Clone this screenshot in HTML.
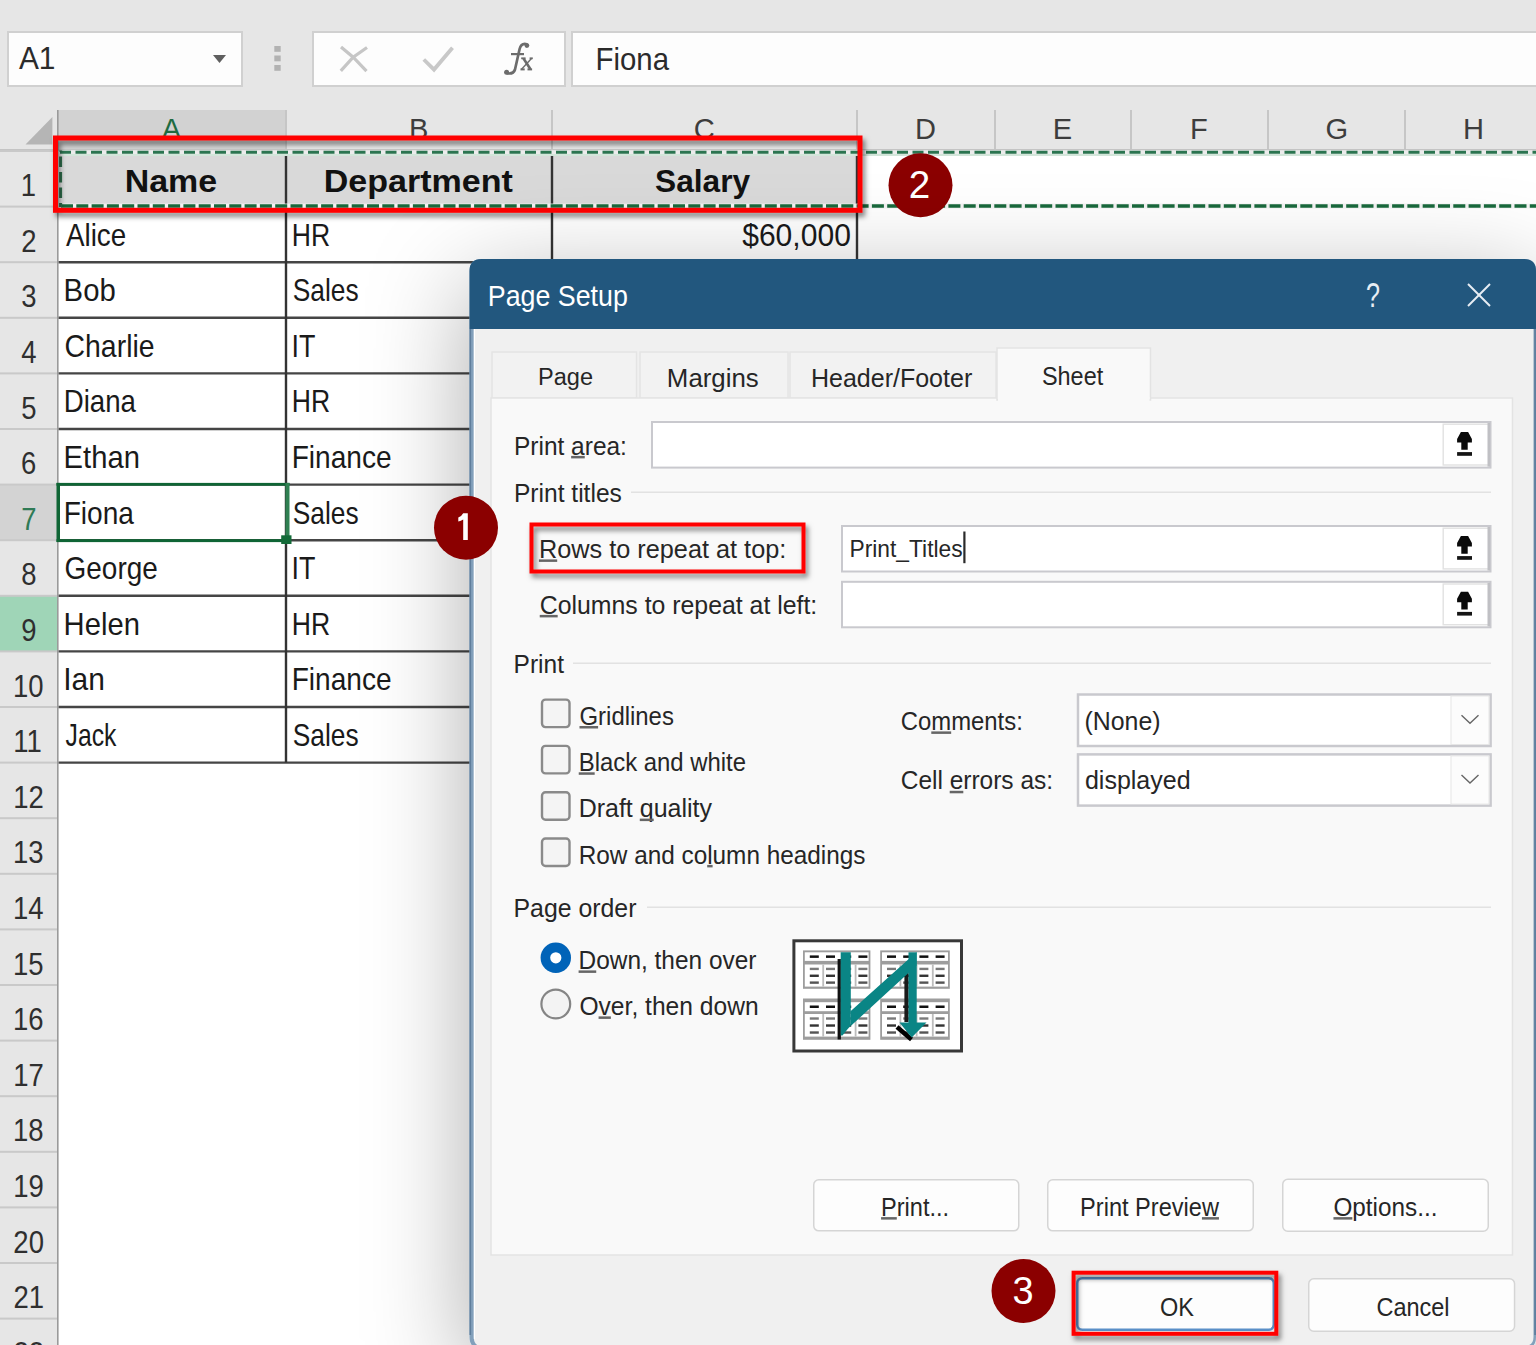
<!DOCTYPE html>
<html><head><meta charset="utf-8"><style>
html,body{margin:0;padding:0;background:#fff;overflow:hidden}
svg{display:block;font-family:"Liberation Sans",sans-serif}
</style></head><body>
<svg width="1536" height="1345" viewBox="0 0 1536 1345">
<defs>
<filter id="ds" x="-30%" y="-30%" width="160%" height="160%"><feDropShadow dx="0" dy="26" stdDeviation="50" flood-color="#000" flood-opacity="0.33"/></filter>
<filter id="rs" x="-10%" y="-30%" width="120%" height="160%"><feDropShadow dx="2.5" dy="4" stdDeviation="2.8" flood-color="#000" flood-opacity="0.5"/></filter>
</defs>
<rect x="0.00" y="0.00" width="1536.00" height="1345.00" fill="#ffffff" />
<rect x="0.00" y="0.00" width="1536.00" height="151.00" fill="#e6e6e6" />
<rect x="8.00" y="32.00" width="234.00" height="54.00" rx="0" fill="#fdfdfd" stroke="#d0d0d0" stroke-width="2"/>
<rect x="313.00" y="32.00" width="252.00" height="54.00" rx="0" fill="#fdfdfd" stroke="#d0d0d0" stroke-width="2"/>
<rect x="572.00" y="32.00" width="987.00" height="54.00" rx="0" fill="#fdfdfd" stroke="#d0d0d0" stroke-width="2"/>
<text x="18.94" y="69.00" font-size="30.52" font-weight="normal" fill="#2b2b2b" textLength="36.52" lengthAdjust="spacingAndGlyphs" >A1</text>
<polygon points="213,55 226,55 219.5,63" fill="#5f5f5f"/>
<rect x="274.30" y="46.00" width="6.40" height="5.80" fill="#b2b2b2" />
<rect x="274.30" y="55.50" width="6.40" height="5.80" fill="#b2b2b2" />
<rect x="274.30" y="65.00" width="6.40" height="5.80" fill="#b2b2b2" />
<polyline points="341,47 353.2,57.2 366.5,71.2" fill="none" stroke="#c6c6c6" stroke-width="3.2"/>
<polyline points="367,47.5 353.2,57.2 340.8,70.8" fill="none" stroke="#c6c6c6" stroke-width="3.2"/>
<polyline points="423.8,59.5 434,69.6 452.5,47.8" fill="none" stroke="#c8c8c8" stroke-width="3.8"/>
<path d="M526.8,44.2 Q521.2,42.8 519.6,49 L515,69.5 Q513.6,74.2 507.5,73.4" fill="none" stroke="#6c6c6c" stroke-width="2.7" stroke-linecap="round"/>
<circle cx="526.9" cy="45.6" r="2.4" fill="#6c6c6c"/>
<circle cx="506.6" cy="72.2" r="2.5" fill="#6c6c6c"/>
<rect x="511.00" y="53.00" width="13.00" height="2.20" fill="#6c6c6c" />
<path d="M523.5,58.5 L530.5,69.3" fill="none" stroke="#6c6c6c" stroke-width="2.6"/>
<path d="M531.5,58.5 L521.5,69.3" fill="none" stroke="#6c6c6c" stroke-width="1.4"/>
<rect x="520.50" y="68.40" width="4.20" height="2.00" fill="#6c6c6c" />
<rect x="527.50" y="68.40" width="4.60" height="2.00" fill="#6c6c6c" />
<rect x="521.20" y="57.40" width="4.40" height="1.80" fill="#6c6c6c" />
<rect x="529.60" y="57.40" width="3.20" height="1.80" fill="#6c6c6c" />
<text x="595.59" y="70.00" font-size="30.52" font-weight="normal" fill="#2b2b2b" textLength="73.41" lengthAdjust="spacingAndGlyphs" >Fiona</text>
<rect x="57.00" y="110.00" width="229.00" height="41.00" fill="#d2d2d2" />
<rect x="285.00" y="110.00" width="2.00" height="41.00" fill="#c6c6c6" />
<rect x="551.00" y="110.00" width="2.00" height="41.00" fill="#c6c6c6" />
<rect x="856.00" y="110.00" width="2.00" height="41.00" fill="#c6c6c6" />
<rect x="994.00" y="110.00" width="2.00" height="41.00" fill="#c6c6c6" />
<rect x="1130.00" y="110.00" width="2.00" height="41.00" fill="#c6c6c6" />
<rect x="1267.00" y="110.00" width="2.00" height="41.00" fill="#c6c6c6" />
<rect x="1404.00" y="110.00" width="2.00" height="41.00" fill="#c6c6c6" />
<rect x="0.00" y="149.00" width="1536.00" height="2.00" fill="#c4c4c4" />
<text x="161.81" y="139.00" font-size="29.07" font-weight="normal" fill="#1e6b41" textLength="19.39" lengthAdjust="spacingAndGlyphs" >A</text>
<text x="408.88" y="139.00" font-size="29.07" font-weight="normal" fill="#3d3d3d" textLength="19.39" lengthAdjust="spacingAndGlyphs" >B</text>
<text x="693.82" y="139.00" font-size="29.07" font-weight="normal" fill="#3d3d3d" textLength="20.99" lengthAdjust="spacingAndGlyphs" >C</text>
<text x="915.01" y="139.00" font-size="29.07" font-weight="normal" fill="#3d3d3d" textLength="20.99" lengthAdjust="spacingAndGlyphs" >D</text>
<text x="1052.74" y="139.00" font-size="29.07" font-weight="normal" fill="#3d3d3d" textLength="19.39" lengthAdjust="spacingAndGlyphs" >E</text>
<text x="1190.01" y="139.00" font-size="29.07" font-weight="normal" fill="#3d3d3d" textLength="17.76" lengthAdjust="spacingAndGlyphs" >F</text>
<text x="1325.55" y="139.00" font-size="29.07" font-weight="normal" fill="#3d3d3d" textLength="22.61" lengthAdjust="spacingAndGlyphs" >G</text>
<text x="1463.00" y="139.00" font-size="29.07" font-weight="normal" fill="#3d3d3d" textLength="20.99" lengthAdjust="spacingAndGlyphs" >H</text>
<polygon points="52.4,117 52.4,144.5 25.5,144.5" fill="#b5b5b5"/>
<rect x="0.00" y="151.00" width="57.00" height="1194.00" fill="#e6e6e6" />
<rect x="0.00" y="484.60" width="57.00" height="55.60" fill="#d3d3d3" />
<rect x="0.00" y="595.80" width="57.00" height="55.60" fill="#9fd5b7" />
<rect x="0.00" y="150.00" width="57.00" height="2.00" fill="#c9c9c9" />
<rect x="0.00" y="205.60" width="57.00" height="2.00" fill="#c9c9c9" />
<rect x="0.00" y="261.20" width="57.00" height="2.00" fill="#c9c9c9" />
<rect x="0.00" y="316.80" width="57.00" height="2.00" fill="#c9c9c9" />
<rect x="0.00" y="372.40" width="57.00" height="2.00" fill="#c9c9c9" />
<rect x="0.00" y="428.00" width="57.00" height="2.00" fill="#c9c9c9" />
<rect x="0.00" y="483.60" width="57.00" height="2.00" fill="#c9c9c9" />
<rect x="0.00" y="539.20" width="57.00" height="2.00" fill="#c9c9c9" />
<rect x="0.00" y="594.80" width="57.00" height="2.00" fill="#c9c9c9" />
<rect x="0.00" y="650.40" width="57.00" height="2.00" fill="#c9c9c9" />
<rect x="0.00" y="706.00" width="57.00" height="2.00" fill="#c9c9c9" />
<rect x="0.00" y="761.60" width="57.00" height="2.00" fill="#c9c9c9" />
<rect x="0.00" y="817.20" width="57.00" height="2.00" fill="#c9c9c9" />
<rect x="0.00" y="872.80" width="57.00" height="2.00" fill="#c9c9c9" />
<rect x="0.00" y="928.40" width="57.00" height="2.00" fill="#c9c9c9" />
<rect x="0.00" y="984.00" width="57.00" height="2.00" fill="#c9c9c9" />
<rect x="0.00" y="1039.60" width="57.00" height="2.00" fill="#c9c9c9" />
<rect x="0.00" y="1095.20" width="57.00" height="2.00" fill="#c9c9c9" />
<rect x="0.00" y="1150.80" width="57.00" height="2.00" fill="#c9c9c9" />
<rect x="0.00" y="1206.40" width="57.00" height="2.00" fill="#c9c9c9" />
<rect x="0.00" y="1262.00" width="57.00" height="2.00" fill="#c9c9c9" />
<rect x="0.00" y="1317.60" width="57.00" height="2.00" fill="#c9c9c9" />
<rect x="0.00" y="1373.20" width="57.00" height="2.00" fill="#c9c9c9" />
<rect x="57.00" y="110.00" width="1.60" height="1235.00" fill="#9a9a9a" />
<text x="20.79" y="196.10" font-size="30.52" font-weight="normal" fill="#2f2f2f" textLength="15.28" lengthAdjust="spacingAndGlyphs" >1</text>
<text x="21.16" y="251.70" font-size="30.52" font-weight="normal" fill="#2f2f2f" textLength="15.28" lengthAdjust="spacingAndGlyphs" >2</text>
<text x="21.24" y="307.30" font-size="30.52" font-weight="normal" fill="#2f2f2f" textLength="15.28" lengthAdjust="spacingAndGlyphs" >3</text>
<text x="21.25" y="362.90" font-size="30.52" font-weight="normal" fill="#2f2f2f" textLength="15.28" lengthAdjust="spacingAndGlyphs" >4</text>
<text x="21.19" y="418.50" font-size="30.52" font-weight="normal" fill="#2f2f2f" textLength="15.28" lengthAdjust="spacingAndGlyphs" >5</text>
<text x="21.07" y="474.10" font-size="30.52" font-weight="normal" fill="#2f2f2f" textLength="15.28" lengthAdjust="spacingAndGlyphs" >6</text>
<text x="21.15" y="529.70" font-size="30.52" font-weight="normal" fill="#2f7a55" textLength="15.28" lengthAdjust="spacingAndGlyphs" >7</text>
<text x="21.16" y="585.30" font-size="30.52" font-weight="normal" fill="#2f2f2f" textLength="15.28" lengthAdjust="spacingAndGlyphs" >8</text>
<text x="21.17" y="640.90" font-size="30.52" font-weight="normal" fill="#2f2f2f" textLength="15.28" lengthAdjust="spacingAndGlyphs" >9</text>
<text x="13.01" y="696.50" font-size="30.52" font-weight="normal" fill="#2f2f2f" textLength="30.56" lengthAdjust="spacingAndGlyphs" >10</text>
<text x="13.15" y="752.10" font-size="30.52" font-weight="normal" fill="#2f2f2f" textLength="28.52" lengthAdjust="spacingAndGlyphs" >11</text>
<text x="13.17" y="807.70" font-size="30.52" font-weight="normal" fill="#2f2f2f" textLength="30.56" lengthAdjust="spacingAndGlyphs" >12</text>
<text x="13.08" y="863.30" font-size="30.52" font-weight="normal" fill="#2f2f2f" textLength="30.56" lengthAdjust="spacingAndGlyphs" >13</text>
<text x="12.88" y="918.90" font-size="30.52" font-weight="normal" fill="#2f2f2f" textLength="30.56" lengthAdjust="spacingAndGlyphs" >14</text>
<text x="13.05" y="974.50" font-size="30.52" font-weight="normal" fill="#2f2f2f" textLength="30.56" lengthAdjust="spacingAndGlyphs" >15</text>
<text x="13.08" y="1030.10" font-size="30.52" font-weight="normal" fill="#2f2f2f" textLength="30.56" lengthAdjust="spacingAndGlyphs" >16</text>
<text x="13.17" y="1085.70" font-size="30.52" font-weight="normal" fill="#2f2f2f" textLength="30.56" lengthAdjust="spacingAndGlyphs" >17</text>
<text x="13.07" y="1141.30" font-size="30.52" font-weight="normal" fill="#2f2f2f" textLength="30.56" lengthAdjust="spacingAndGlyphs" >18</text>
<text x="13.13" y="1196.90" font-size="30.52" font-weight="normal" fill="#2f2f2f" textLength="30.56" lengthAdjust="spacingAndGlyphs" >19</text>
<text x="13.37" y="1252.50" font-size="30.52" font-weight="normal" fill="#2f2f2f" textLength="30.56" lengthAdjust="spacingAndGlyphs" >20</text>
<text x="13.50" y="1308.10" font-size="30.52" font-weight="normal" fill="#2f2f2f" textLength="30.56" lengthAdjust="spacingAndGlyphs" >21</text>
<text x="13.52" y="1363.70" font-size="30.52" font-weight="normal" fill="#2f2f2f" textLength="30.56" lengthAdjust="spacingAndGlyphs" >22</text>
<rect x="58.60" y="151.00" width="798.40" height="55.60" fill="#d9d9d9" />
<line x1="58.60" y1="262.20" x2="858.00" y2="262.20" stroke="#454545" stroke-width="2.4" />
<line x1="58.60" y1="317.80" x2="858.00" y2="317.80" stroke="#454545" stroke-width="2.4" />
<line x1="58.60" y1="373.40" x2="858.00" y2="373.40" stroke="#454545" stroke-width="2.4" />
<line x1="58.60" y1="429.00" x2="858.00" y2="429.00" stroke="#454545" stroke-width="2.4" />
<line x1="58.60" y1="484.60" x2="858.00" y2="484.60" stroke="#454545" stroke-width="2.4" />
<line x1="58.60" y1="540.20" x2="858.00" y2="540.20" stroke="#454545" stroke-width="2.4" />
<line x1="58.60" y1="595.80" x2="858.00" y2="595.80" stroke="#454545" stroke-width="2.4" />
<line x1="58.60" y1="651.40" x2="858.00" y2="651.40" stroke="#454545" stroke-width="2.4" />
<line x1="58.60" y1="707.00" x2="858.00" y2="707.00" stroke="#454545" stroke-width="2.4" />
<line x1="58.60" y1="762.60" x2="858.00" y2="762.60" stroke="#454545" stroke-width="2.4" />
<line x1="286.00" y1="151.00" x2="286.00" y2="762.60" stroke="#333333" stroke-width="2.4" />
<line x1="552.00" y1="151.00" x2="552.00" y2="762.60" stroke="#333333" stroke-width="2.4" />
<line x1="857.00" y1="151.00" x2="857.00" y2="762.60" stroke="#333333" stroke-width="2.4" />
<text x="124.73" y="192.00" font-size="31.25" font-weight="bold" fill="#111" textLength="92.43" lengthAdjust="spacingAndGlyphs" >Name</text>
<text x="323.72" y="192.00" font-size="31.25" font-weight="bold" fill="#111" textLength="189.19" lengthAdjust="spacingAndGlyphs" >Department</text>
<text x="655.09" y="192.00" font-size="31.25" font-weight="bold" fill="#111" textLength="95.08" lengthAdjust="spacingAndGlyphs" >Salary</text>
<text x="65.95" y="245.50" font-size="31.25" font-weight="normal" fill="#1a1a1a" textLength="60.29" lengthAdjust="spacingAndGlyphs" >Alice</text>
<text x="291.82" y="245.50" font-size="31.25" font-weight="normal" fill="#1a1a1a" textLength="38.42" lengthAdjust="spacingAndGlyphs" >HR</text>
<text x="63.60" y="301.10" font-size="31.25" font-weight="normal" fill="#1a1a1a" textLength="52.13" lengthAdjust="spacingAndGlyphs" >Bob</text>
<text x="292.80" y="301.10" font-size="31.25" font-weight="normal" fill="#1a1a1a" textLength="65.85" lengthAdjust="spacingAndGlyphs" >Sales</text>
<text x="64.56" y="356.70" font-size="31.25" font-weight="normal" fill="#1a1a1a" textLength="90.01" lengthAdjust="spacingAndGlyphs" >Charlie</text>
<text x="291.52" y="356.70" font-size="31.25" font-weight="normal" fill="#1a1a1a" textLength="23.90" lengthAdjust="spacingAndGlyphs" >IT</text>
<text x="63.73" y="412.30" font-size="31.25" font-weight="normal" fill="#1a1a1a" textLength="72.27" lengthAdjust="spacingAndGlyphs" >Diana</text>
<text x="291.82" y="412.30" font-size="31.25" font-weight="normal" fill="#1a1a1a" textLength="38.42" lengthAdjust="spacingAndGlyphs" >HR</text>
<text x="63.61" y="467.90" font-size="31.25" font-weight="normal" fill="#1a1a1a" textLength="76.29" lengthAdjust="spacingAndGlyphs" >Ethan</text>
<text x="291.70" y="467.90" font-size="31.25" font-weight="normal" fill="#1a1a1a" textLength="99.95" lengthAdjust="spacingAndGlyphs" >Finance</text>
<text x="63.69" y="523.50" font-size="31.25" font-weight="normal" fill="#1a1a1a" textLength="70.31" lengthAdjust="spacingAndGlyphs" >Fiona</text>
<text x="292.80" y="523.50" font-size="31.25" font-weight="normal" fill="#1a1a1a" textLength="65.85" lengthAdjust="spacingAndGlyphs" >Sales</text>
<text x="64.59" y="579.10" font-size="31.25" font-weight="normal" fill="#1a1a1a" textLength="93.25" lengthAdjust="spacingAndGlyphs" >George</text>
<text x="291.52" y="579.10" font-size="31.25" font-weight="normal" fill="#1a1a1a" textLength="23.90" lengthAdjust="spacingAndGlyphs" >IT</text>
<text x="63.60" y="634.70" font-size="31.25" font-weight="normal" fill="#1a1a1a" textLength="76.29" lengthAdjust="spacingAndGlyphs" >Helen</text>
<text x="291.82" y="634.70" font-size="31.25" font-weight="normal" fill="#1a1a1a" textLength="38.42" lengthAdjust="spacingAndGlyphs" >HR</text>
<text x="63.23" y="690.30" font-size="31.25" font-weight="normal" fill="#1a1a1a" textLength="41.72" lengthAdjust="spacingAndGlyphs" >Ian</text>
<text x="291.70" y="690.30" font-size="31.25" font-weight="normal" fill="#1a1a1a" textLength="99.95" lengthAdjust="spacingAndGlyphs" >Finance</text>
<text x="65.61" y="745.90" font-size="31.25" font-weight="normal" fill="#1a1a1a" textLength="50.85" lengthAdjust="spacingAndGlyphs" >Jack</text>
<text x="292.80" y="745.90" font-size="31.25" font-weight="normal" fill="#1a1a1a" textLength="65.85" lengthAdjust="spacingAndGlyphs" >Sales</text>
<text x="742.18" y="245.50" font-size="31.25" font-weight="normal" fill="#1a1a1a" textLength="108.70" lengthAdjust="spacingAndGlyphs" >$60,000</text>
<rect x="56.50" y="482.90" width="233.00" height="2.80" fill="#0f6535" />
<rect x="56.50" y="482.90" width="3.50" height="59.00" fill="#0f6535" />
<rect x="285.40" y="482.90" width="4.10" height="54.00" fill="#2f8052" />
<rect x="56.50" y="539.20" width="226.00" height="2.90" fill="#0f6535" />
<rect x="281.20" y="535.30" width="10.30" height="8.70" fill="#136a38" />
<rect x="59.00" y="150.20" width="1477.00" height="5.20" fill="#ececec" />
<rect x="59.00" y="154.00" width="1477.00" height="2.00" fill="#d3e6da" />
<rect x="59.00" y="203.60" width="1477.00" height="5.00" fill="#f3f3f3" />
<rect x="58.80" y="150.20" width="3.60" height="57.50" fill="#e4e4e4" />
<line x1="59.00" y1="152.20" x2="1536.00" y2="152.20" stroke="#2b7550" stroke-width="2.9" stroke-dasharray="11 4.5" stroke-dashoffset="-1"/>
<line x1="59.00" y1="206.00" x2="1536.00" y2="206.00" stroke="#18693c" stroke-width="3.6" stroke-dasharray="12 3.3" stroke-dashoffset="-2"/>
<line x1="60.60" y1="150.50" x2="60.60" y2="207.00" stroke="#2f6f4c" stroke-width="3" stroke-dasharray="10.5 5" stroke-dashoffset="-6"/>
<rect x="55.5" y="138" width="804.5" height="72.3" fill="none" stroke="#ff0000" stroke-width="5" filter="url(#rs)"/>
<circle cx="920.5" cy="185.3" r="32" fill="#8b0000"/>
<text x="908.66" y="197.60" font-size="38.37" font-weight="normal" fill="#ffffff" textLength="21.49" lengthAdjust="spacingAndGlyphs" >2</text>
<path d="M469.5,1337 V271 Q469.5,259 481.5,259 H1524 Q1536,259 1536,271 V1337 Q1536,1349 1524,1349 H481.5 Q469.5,1349 469.5,1337 Z" fill="#82a0bb" filter="url(#ds)"/>
<path d="M473.8,1337 V329 H1533.5 V1337 Q1533.5,1346 1524,1346 H481.5 Q473.8,1346 473.8,1337 Z" fill="#f0f0f0"/>
<path d="M469.5,329 V271 Q469.5,259 481.5,259 H1524 Q1536,259 1536,271 V329 Z" fill="#22577e"/>
<rect x="469.50" y="329.00" width="1.60" height="1006.00" fill="#5f7e9c" />
<rect x="473.80" y="329.00" width="1.20" height="1010.00" fill="#ffffff" />
<rect x="1534.20" y="329.00" width="1.80" height="1006.00" fill="#5f7f9e" />
<text x="487.80" y="305.60" font-size="29.51" font-weight="normal" fill="#ffffff" textLength="140.02" lengthAdjust="spacingAndGlyphs" >Page Setup</text>
<text x="1365.97" y="307.00" font-size="34.88" font-weight="normal" fill="#e8eef4" textLength="13.96" lengthAdjust="spacingAndGlyphs" >?</text>
<line x1="1468.00" y1="284.00" x2="1490.00" y2="306.00" stroke="#e8eef4" stroke-width="2" />
<line x1="1490.00" y1="284.00" x2="1468.00" y2="306.00" stroke="#e8eef4" stroke-width="2" />
<rect x="492" y="352" width="144.5" height="46" fill="#f2f2f2" stroke="#e4e4e4" stroke-width="1.5"/>
<rect x="640" y="352" width="148" height="46" fill="#f2f2f2" stroke="#e4e4e4" stroke-width="1.5"/>
<rect x="790" y="352" width="206" height="46" fill="#f2f2f2" stroke="#e4e4e4" stroke-width="1.5"/>
<rect x="491" y="398" width="1021.5" height="857" fill="#f9f9f9" stroke="#e3e3e3" stroke-width="1.5"/>
<rect x="997.00" y="348.00" width="153.50" height="52.00" fill="#f9f9f9" stroke="#e3e3e3" stroke-width="1.5"/>
<rect x="998.00" y="397.00" width="151.50" height="4.00" fill="#f9f9f9" />
<text x="538.07" y="385.00" font-size="23.98" font-weight="normal" fill="#262626" textLength="54.98" lengthAdjust="spacingAndGlyphs" >Page</text>
<text x="666.88" y="386.50" font-size="25.44" font-weight="normal" fill="#262626" textLength="91.85" lengthAdjust="spacingAndGlyphs" >Margins</text>
<text x="810.95" y="386.50" font-size="25.44" font-weight="normal" fill="#262626" textLength="161.27" lengthAdjust="spacingAndGlyphs" >Header/Footer</text>
<text x="1041.94" y="384.70" font-size="25.44" font-weight="normal" fill="#262626" textLength="61.24" lengthAdjust="spacingAndGlyphs" >Sheet</text>
<rect x="652" y="422" width="838.5" height="45.60000000000002" fill="#ffffff" stroke="#c9c9ce" stroke-width="2"/>
<rect x="1443.2" y="424.2" width="45.6" height="40.800000000000026" fill="#ffffff" stroke="#e2e2e2" stroke-width="1.4"/>
<rect x="1487.50" y="423.00" width="2.50" height="43.60" fill="#c0c0c4" />
<polygon points="1460.9,432 1468.1,432 1471.9,439 1471.9,442.5 1467.7,442.5 1467.7,449.7 1461.3,449.7 1461.3,442.5 1457.1,442.5 1457.1,439" fill="#0a0a0a"/>
<rect x="1457.10" y="452.10" width="14.90" height="3.70" fill="#151515" />
<text x="513.99" y="454.50" font-size="25.44" font-weight="normal" fill="#262626" textLength="112.94" lengthAdjust="spacingAndGlyphs" >Print area:</text>
<rect x="571.13" y="455.90" width="13.62" height="2.50" fill="#666666" />
<text x="513.98" y="502.00" font-size="25.44" font-weight="normal" fill="#262626" textLength="107.90" lengthAdjust="spacingAndGlyphs" >Print titles</text>
<rect x="631.00" y="491.50" width="860.00" height="1.50" fill="#e2e2e2" />
<rect x="842" y="526" width="648.5" height="45.5" fill="#ffffff" stroke="#c9c9ce" stroke-width="2"/>
<rect x="1443.2" y="528.2" width="45.6" height="40.7" fill="#ffffff" stroke="#e2e2e2" stroke-width="1.4"/>
<rect x="1487.50" y="527.00" width="2.50" height="43.50" fill="#c0c0c4" />
<polygon points="1460.9,536 1468.1,536 1471.9,543 1471.9,546.5 1467.7,546.5 1467.7,553.7 1461.3,553.7 1461.3,546.5 1457.1,546.5 1457.1,543" fill="#0a0a0a"/>
<rect x="1457.10" y="556.10" width="14.90" height="3.70" fill="#151515" />
<rect x="842" y="581.8" width="648.5" height="45.5" fill="#ffffff" stroke="#c9c9ce" stroke-width="2"/>
<rect x="1443.2" y="584.0" width="45.6" height="40.7" fill="#ffffff" stroke="#e2e2e2" stroke-width="1.4"/>
<rect x="1487.50" y="582.80" width="2.50" height="43.50" fill="#c0c0c4" />
<polygon points="1460.9,591.8 1468.1,591.8 1471.9,598.8 1471.9,602.3 1467.7,602.3 1467.7,609.5 1461.3,609.5 1461.3,602.3 1457.1,602.3 1457.1,598.8" fill="#0a0a0a"/>
<rect x="1457.10" y="611.90" width="14.90" height="3.70" fill="#151515" />
<text x="538.93" y="558.00" font-size="25.44" font-weight="normal" fill="#262626" textLength="247.38" lengthAdjust="spacingAndGlyphs" >Rows to repeat at top:</text>
<rect x="538.93" y="559.40" width="18.26" height="2.50" fill="#666666" />
<text x="539.74" y="613.50" font-size="25.44" font-weight="normal" fill="#262626" textLength="277.53" lengthAdjust="spacingAndGlyphs" >Columns to repeat at left:</text>
<rect x="539.74" y="614.90" width="17.94" height="2.50" fill="#666666" />
<text x="849.53" y="557.00" font-size="24.13" font-weight="normal" fill="#262626" textLength="113.09" lengthAdjust="spacingAndGlyphs" >Print_Titles</text>
<rect x="963.30" y="531.50" width="2.20" height="31.70" fill="#2a2a2a" />
<rect x="531.5" y="524.5" width="272" height="47" fill="none" stroke="#ff0000" stroke-width="4" filter="url(#rs)"/>
<text x="513.59" y="673.00" font-size="25.44" font-weight="normal" fill="#262626" textLength="50.39" lengthAdjust="spacingAndGlyphs" >Print</text>
<rect x="573.00" y="662.50" width="918.00" height="1.50" fill="#e2e2e2" />
<rect x="542" y="699.6" width="27.5" height="27.5" rx="3.5" fill="#f4f4f4" stroke="#8a8a8a" stroke-width="2.4"/>
<text x="579.50" y="724.60" font-size="25.44" font-weight="normal" fill="#262626" textLength="94.37" lengthAdjust="spacingAndGlyphs" >Gridlines</text>
<rect x="579.50" y="726.00" width="18.60" height="2.50" fill="#666666" />
<rect x="542" y="745.9" width="27.5" height="27.5" rx="3.5" fill="#f4f4f4" stroke="#8a8a8a" stroke-width="2.4"/>
<text x="578.74" y="770.90" font-size="25.44" font-weight="normal" fill="#262626" textLength="167.32" lengthAdjust="spacingAndGlyphs" >Black and white</text>
<rect x="578.74" y="772.30" width="15.93" height="2.50" fill="#666666" />
<rect x="542" y="792.2" width="27.5" height="27.5" rx="3.5" fill="#f4f4f4" stroke="#8a8a8a" stroke-width="2.4"/>
<text x="578.65" y="817.20" font-size="25.44" font-weight="normal" fill="#262626" textLength="133.40" lengthAdjust="spacingAndGlyphs" >Draft quality</text>
<rect x="639.78" y="818.60" width="13.91" height="2.50" fill="#666666" />
<rect x="542" y="838.5" width="27.5" height="27.5" rx="3.5" fill="#f4f4f4" stroke="#8a8a8a" stroke-width="2.4"/>
<text x="578.70" y="863.50" font-size="25.44" font-weight="normal" fill="#262626" textLength="286.78" lengthAdjust="spacingAndGlyphs" >Row and column headings</text>
<rect x="707.20" y="864.90" width="5.41" height="2.50" fill="#666666" />
<text x="900.79" y="730.00" font-size="25.44" font-weight="normal" fill="#262626" textLength="121.99" lengthAdjust="spacingAndGlyphs" >Comments:</text>
<rect x="931.29" y="731.40" width="19.88" height="2.50" fill="#666666" />
<text x="900.76" y="789.40" font-size="25.44" font-weight="normal" fill="#262626" textLength="152.28" lengthAdjust="spacingAndGlyphs" >Cell errors as:</text>
<rect x="949.70" y="790.80" width="13.61" height="2.50" fill="#666666" />
<rect x="1078" y="694.5" width="412.6" height="51.5" fill="#ffffff" stroke="#c9c9ce" stroke-width="2.5"/>
<rect x="1451" y="696.0" width="38" height="48.5" fill="#fcfcfc" stroke="#e6e6e6" stroke-width="1"/>
<polyline points="1461.5,715.25 1470,723.25 1478.5,715.25" fill="none" stroke="#666" stroke-width="1.4"/>
<text x="1084.46" y="730.00" font-size="25.44" font-weight="normal" fill="#262626" textLength="76.09" lengthAdjust="spacingAndGlyphs" >(None)</text>
<rect x="1078" y="754.4" width="412.6" height="51.200000000000045" fill="#ffffff" stroke="#c9c9ce" stroke-width="2.5"/>
<rect x="1451" y="755.9" width="38" height="48.200000000000045" fill="#fcfcfc" stroke="#e6e6e6" stroke-width="1"/>
<polyline points="1461.5,775.0 1470,783.0 1478.5,775.0" fill="none" stroke="#666" stroke-width="1.4"/>
<text x="1084.95" y="788.50" font-size="25.44" font-weight="normal" fill="#262626" textLength="105.66" lengthAdjust="spacingAndGlyphs" >displayed</text>
<text x="513.56" y="917.00" font-size="25.44" font-weight="normal" fill="#262626" textLength="122.85" lengthAdjust="spacingAndGlyphs" >Page order</text>
<rect x="647.00" y="906.50" width="844.00" height="1.50" fill="#e2e2e2" />
<circle cx="555.8" cy="957.8" r="15.2" fill="#0063b8"/>
<circle cx="555.8" cy="957.8" r="5.6" fill="#ffffff"/>
<circle cx="555.8" cy="1004" r="14.4" fill="#f3f3f3" stroke="#858585" stroke-width="2.2"/>
<text x="578.60" y="969.00" font-size="25.44" font-weight="normal" fill="#262626" textLength="177.81" lengthAdjust="spacingAndGlyphs" >Down, then over</text>
<rect x="578.60" y="970.40" width="17.63" height="2.50" fill="#666666" />
<text x="579.43" y="1015.00" font-size="25.44" font-weight="normal" fill="#262626" textLength="179.16" lengthAdjust="spacingAndGlyphs" >Over, then down</text>
<rect x="598.57" y="1016.40" width="12.30" height="2.50" fill="#666666" />
<g id="icon">
<rect x="793.9" y="940.8" width="167.6" height="110.2" fill="#ffffff" stroke="#383838" stroke-width="3"/>
<rect x="803.00" y="950.40" width="67.40" height="38.40" fill="#9d9d9d" />
<rect x="804.80" y="952.30" width="63.80" height="8.60" fill="#ffffff" />
<rect x="804.80" y="964.50" width="63.80" height="22.10" fill="#ffffff" />
<rect x="822.30" y="964.50" width="1.80" height="22.10" fill="#bdbdbd" />
<rect x="838.50" y="964.50" width="1.80" height="22.10" fill="#bdbdbd" />
<rect x="854.70" y="964.50" width="1.80" height="22.10" fill="#bdbdbd" />
<rect x="809.80" y="955.40" width="9.00" height="2.50" fill="#111" />
<rect x="809.80" y="967.72" width="9.00" height="2.40" fill="#7a7a7a" />
<rect x="809.80" y="974.57" width="9.00" height="2.40" fill="#333" />
<rect x="809.80" y="981.42" width="9.00" height="2.40" fill="#555" />
<rect x="826.00" y="955.40" width="9.00" height="2.50" fill="#111" />
<rect x="826.00" y="967.72" width="9.00" height="2.40" fill="#7a7a7a" />
<rect x="826.00" y="974.57" width="9.00" height="2.40" fill="#333" />
<rect x="826.00" y="981.42" width="9.00" height="2.40" fill="#555" />
<rect x="842.20" y="955.40" width="9.00" height="2.50" fill="#111" />
<rect x="842.20" y="967.72" width="9.00" height="2.40" fill="#7a7a7a" />
<rect x="842.20" y="974.57" width="9.00" height="2.40" fill="#333" />
<rect x="842.20" y="981.42" width="9.00" height="2.40" fill="#555" />
<rect x="858.40" y="955.40" width="9.00" height="2.50" fill="#111" />
<rect x="858.40" y="967.72" width="9.00" height="2.40" fill="#7a7a7a" />
<rect x="858.40" y="974.57" width="9.00" height="2.40" fill="#333" />
<rect x="858.40" y="981.42" width="9.00" height="2.40" fill="#555" />
<rect x="803.00" y="998.50" width="67.40" height="41.30" fill="#9d9d9d" />
<rect x="804.80" y="1002.20" width="63.80" height="9.00" fill="#ffffff" />
<rect x="804.80" y="1014.00" width="63.80" height="22.60" fill="#ffffff" />
<rect x="822.30" y="1014.00" width="1.80" height="22.60" fill="#bdbdbd" />
<rect x="838.50" y="1014.00" width="1.80" height="22.60" fill="#bdbdbd" />
<rect x="854.70" y="1014.00" width="1.80" height="22.60" fill="#bdbdbd" />
<rect x="809.80" y="1005.50" width="9.00" height="2.50" fill="#111" />
<rect x="809.80" y="1017.32" width="9.00" height="2.40" fill="#7a7a7a" />
<rect x="809.80" y="1024.33" width="9.00" height="2.40" fill="#333" />
<rect x="809.80" y="1031.33" width="9.00" height="2.40" fill="#555" />
<rect x="826.00" y="1005.50" width="9.00" height="2.50" fill="#111" />
<rect x="826.00" y="1017.32" width="9.00" height="2.40" fill="#7a7a7a" />
<rect x="826.00" y="1024.33" width="9.00" height="2.40" fill="#333" />
<rect x="826.00" y="1031.33" width="9.00" height="2.40" fill="#555" />
<rect x="842.20" y="1005.50" width="9.00" height="2.50" fill="#111" />
<rect x="842.20" y="1017.32" width="9.00" height="2.40" fill="#7a7a7a" />
<rect x="842.20" y="1024.33" width="9.00" height="2.40" fill="#333" />
<rect x="842.20" y="1031.33" width="9.00" height="2.40" fill="#555" />
<rect x="858.40" y="1005.50" width="9.00" height="2.50" fill="#111" />
<rect x="858.40" y="1017.32" width="9.00" height="2.40" fill="#7a7a7a" />
<rect x="858.40" y="1024.33" width="9.00" height="2.40" fill="#333" />
<rect x="858.40" y="1031.33" width="9.00" height="2.40" fill="#555" />
<rect x="880.20" y="950.40" width="69.60" height="38.40" fill="#9d9d9d" />
<rect x="882.00" y="952.30" width="66.00" height="8.60" fill="#ffffff" />
<rect x="882.00" y="964.50" width="66.00" height="22.10" fill="#ffffff" />
<rect x="899.50" y="964.50" width="1.80" height="22.10" fill="#bdbdbd" />
<rect x="915.70" y="964.50" width="1.80" height="22.10" fill="#bdbdbd" />
<rect x="931.90" y="964.50" width="1.80" height="22.10" fill="#bdbdbd" />
<rect x="887.00" y="955.40" width="9.00" height="2.50" fill="#111" />
<rect x="887.00" y="967.72" width="9.00" height="2.40" fill="#7a7a7a" />
<rect x="887.00" y="974.57" width="9.00" height="2.40" fill="#333" />
<rect x="887.00" y="981.42" width="9.00" height="2.40" fill="#555" />
<rect x="903.20" y="955.40" width="9.00" height="2.50" fill="#111" />
<rect x="903.20" y="967.72" width="9.00" height="2.40" fill="#7a7a7a" />
<rect x="903.20" y="974.57" width="9.00" height="2.40" fill="#333" />
<rect x="903.20" y="981.42" width="9.00" height="2.40" fill="#555" />
<rect x="919.40" y="955.40" width="9.00" height="2.50" fill="#111" />
<rect x="919.40" y="967.72" width="9.00" height="2.40" fill="#7a7a7a" />
<rect x="919.40" y="974.57" width="9.00" height="2.40" fill="#333" />
<rect x="919.40" y="981.42" width="9.00" height="2.40" fill="#555" />
<rect x="935.60" y="955.40" width="9.00" height="2.50" fill="#111" />
<rect x="935.60" y="967.72" width="9.00" height="2.40" fill="#7a7a7a" />
<rect x="935.60" y="974.57" width="9.00" height="2.40" fill="#333" />
<rect x="935.60" y="981.42" width="9.00" height="2.40" fill="#555" />
<rect x="880.20" y="998.50" width="69.60" height="41.30" fill="#9d9d9d" />
<rect x="882.00" y="1002.20" width="66.00" height="9.00" fill="#ffffff" />
<rect x="882.00" y="1014.00" width="66.00" height="22.60" fill="#ffffff" />
<rect x="899.50" y="1014.00" width="1.80" height="22.60" fill="#bdbdbd" />
<rect x="915.70" y="1014.00" width="1.80" height="22.60" fill="#bdbdbd" />
<rect x="931.90" y="1014.00" width="1.80" height="22.60" fill="#bdbdbd" />
<rect x="887.00" y="1005.50" width="9.00" height="2.50" fill="#111" />
<rect x="887.00" y="1017.32" width="9.00" height="2.40" fill="#7a7a7a" />
<rect x="887.00" y="1024.33" width="9.00" height="2.40" fill="#333" />
<rect x="887.00" y="1031.33" width="9.00" height="2.40" fill="#555" />
<rect x="903.20" y="1005.50" width="9.00" height="2.50" fill="#111" />
<rect x="903.20" y="1017.32" width="9.00" height="2.40" fill="#7a7a7a" />
<rect x="903.20" y="1024.33" width="9.00" height="2.40" fill="#333" />
<rect x="903.20" y="1031.33" width="9.00" height="2.40" fill="#555" />
<rect x="919.40" y="1005.50" width="9.00" height="2.50" fill="#111" />
<rect x="919.40" y="1017.32" width="9.00" height="2.40" fill="#7a7a7a" />
<rect x="919.40" y="1024.33" width="9.00" height="2.40" fill="#333" />
<rect x="919.40" y="1031.33" width="9.00" height="2.40" fill="#555" />
<rect x="935.60" y="1005.50" width="9.00" height="2.50" fill="#111" />
<rect x="935.60" y="1017.32" width="9.00" height="2.40" fill="#7a7a7a" />
<rect x="935.60" y="1024.33" width="9.00" height="2.40" fill="#333" />
<rect x="935.60" y="1031.33" width="9.00" height="2.40" fill="#555" />
<rect x="837.60" y="959.00" width="3.30" height="80.50" fill="#111" />
<rect x="904.40" y="971.00" width="4.20" height="51.00" fill="#1a1a1a" />
<line x1="897.00" y1="1027.00" x2="911.50" y2="1039.50" stroke="#000" stroke-width="4.5" />
<polygon points="840.7,952.3 850.8,952.3 850.8,1025 842.5,1035.5 840.7,1035.5" fill="#0a8585"/>
<polygon points="841.5,1034.5 916.6,965.4 916.6,951.9 850.8,1011.1 850.8,1025" fill="#0a8585"/>
<rect x="908.50" y="952.30" width="8.20" height="71.00" fill="#0a8585" />
<polygon points="899.5,1022.6 926.5,1022.6 911.7,1037.4" fill="#0a8585"/>
</g>
<rect x="813.75" y="1179.75" width="205.0" height="51.09999999999991" rx="5" fill="#fdfdfd" stroke="#d5d5d5" stroke-width="1.5"/>
<text x="881.07" y="1215.70" font-size="25.44" font-weight="normal" fill="#262626" textLength="68.08" lengthAdjust="spacingAndGlyphs" >Print...</text>
<rect x="881.07" y="1217.10" width="15.72" height="2.50" fill="#666666" />
<rect x="1047.75" y="1179.75" width="205.5" height="51.09999999999991" rx="5" fill="#fdfdfd" stroke="#d5d5d5" stroke-width="1.5"/>
<text x="1080.07" y="1215.70" font-size="25.44" font-weight="normal" fill="#262626" textLength="138.88" lengthAdjust="spacingAndGlyphs" >Print Preview</text>
<rect x="1201.92" y="1217.10" width="17.03" height="2.50" fill="#666666" />
<rect x="1282.75" y="1179.25" width="205.5" height="52.0" rx="5" fill="#fdfdfd" stroke="#d5d5d5" stroke-width="1.5"/>
<text x="1333.45" y="1215.70" font-size="25.44" font-weight="normal" fill="#262626" textLength="103.97" lengthAdjust="spacingAndGlyphs" >Options...</text>
<rect x="1333.45" y="1217.10" width="18.90" height="2.50" fill="#666666" />
<rect x="1077.25" y="1278.25" width="196.5" height="51.5" rx="5" fill="#fdfdfd" stroke="#5a8fc8" stroke-width="2.5"/>
<text x="1159.89" y="1315.60" font-size="25.44" font-weight="normal" fill="#262626" textLength="33.98" lengthAdjust="spacingAndGlyphs" >OK</text>
<rect x="1308.75" y="1278.75" width="205.79999999999995" height="52.5" rx="5" fill="#fdfdfd" stroke="#d5d5d5" stroke-width="1.5"/>
<text x="1376.41" y="1316.00" font-size="25.44" font-weight="normal" fill="#262626" textLength="73.17" lengthAdjust="spacingAndGlyphs" >Cancel</text>
<rect x="1073.6" y="1272.7" width="202.7" height="61.1" fill="none" stroke="#ff0000" stroke-width="4" filter="url(#rs)"/>
<circle cx="466" cy="527.7" r="32" fill="#8b0000"/>
<path d="M463.2,513.3 H467.8 V540 H463.2 V519.6 Q461,521.2 458.3,521.6 V517.6 Q461.5,516.5 463.2,513.3 Z" fill="#ffffff"/>
<circle cx="1023.5" cy="1291" r="32" fill="#8b0000"/>
<text x="1012.55" y="1304.00" font-size="38.37" font-weight="normal" fill="#ffffff" textLength="21.11" lengthAdjust="spacingAndGlyphs" >3</text>
</svg></body></html>
